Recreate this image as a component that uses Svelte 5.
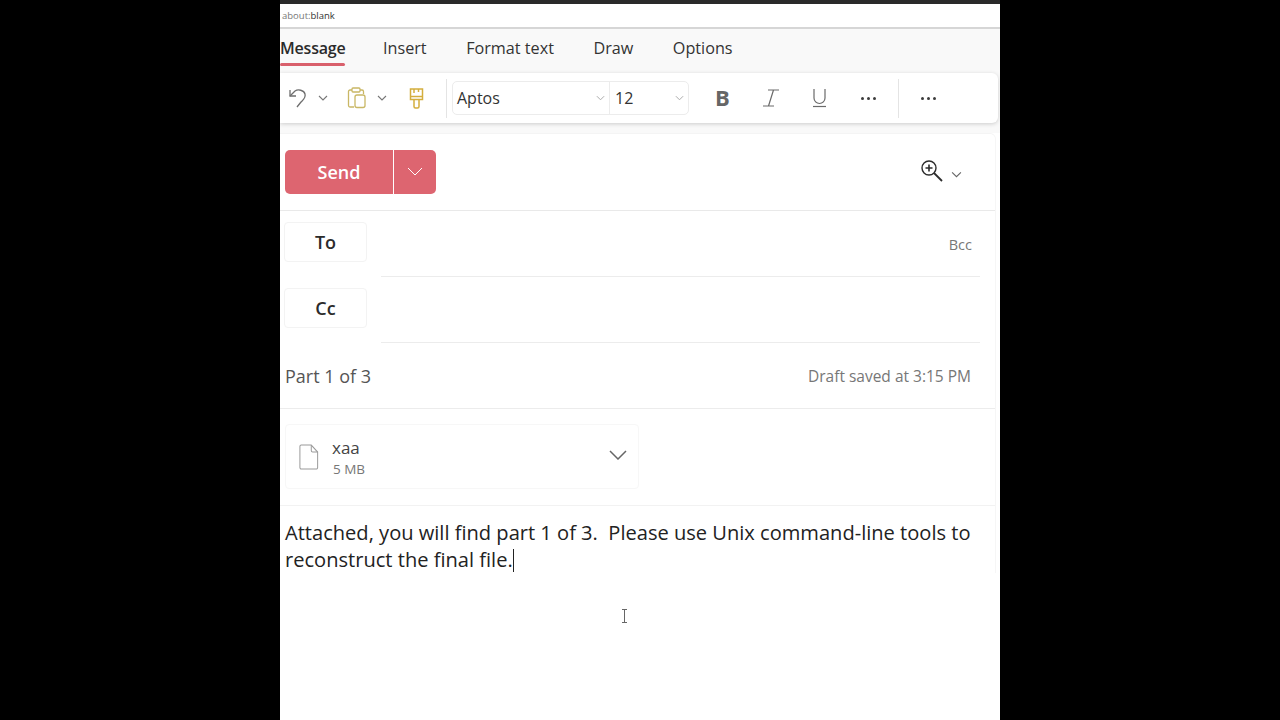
<script lang="ts">
	const tabs = ['Message', 'Insert', 'Format text', 'Draw', 'Options'];
</script>

<div class="window">
	<div class="address">
		<span class="scheme">about:</span><span class="host">blank</span>
	</div>

	<div class="ribbon">
		<nav class="tabs">
			{#each tabs as tab, i}
				<span class="tab" class:active={i === 0}>{tab}</span>
			{/each}
		</nav>

		<div class="toolbar">
			<svg class="undo" width="20" height="22" viewBox="0 0 20 22" fill="none" stroke="#6e6e6e" stroke-width="1.3">
				<path d="M2 3v6h6" />
				<path d="M2 9l5-5c3-2 9-1 10 3 1 4-2 6-4 8l-4 5" />
			</svg>
			<svg class="chev chev-undo" width="10" height="6" viewBox="0 0 10 6" fill="none" stroke="#777" stroke-width="1.1"><path d="M1 1l4 4 4-4" /></svg>
			<svg class="paste" width="20" height="22" viewBox="0 0 20 22" fill="none" stroke="#c9b765" stroke-width="1.3">
				<path d="M5 3H3a1.5 1.5 0 0 0-1.5 1.5v14A1.5 1.5 0 0 0 3 20h4" />
				<path d="M13 3h2a1.5 1.5 0 0 1 1.5 1.5V7" />
				<rect x="5" y="1" width="8" height="4" rx="1" />
				<rect x="8" y="8" width="10" height="12.5" rx="2" />
			</svg>
			<svg class="chev chev-paste" width="10" height="6" viewBox="0 0 10 6" fill="none" stroke="#777" stroke-width="1.1"><path d="M1 1l4 4 4-4" /></svg>
			<svg class="brush" width="15" height="21" viewBox="0 0 15 21" fill="none" stroke="#d4ae3e" stroke-width="1.5">
				<path d="M1.5 1h12v10.5h-12z" />
				<path d="M5 1v4M9.5 1v3" />
				<path d="M1.5 8.5h12" />
				<path d="M5 12v6.5a1.5 1.5 0 0 0 1.5 1.5h2a1.5 1.5 0 0 0 1.5-1.5V12" />
			</svg>
			<span class="divider first"></span>
			<div class="font-box">
				<div class="font-name">
					<span>Aptos</span>
					<svg width="9" height="6" viewBox="0 0 10 6" fill="none" stroke="#aaa" stroke-width="1.1"><path d="M1 1l4 4 4-4" /></svg>
				</div>
				<div class="font-size">
					<span>12</span>
					<svg width="9" height="6" viewBox="0 0 10 6" fill="none" stroke="#aaa" stroke-width="1.1"><path d="M1 1l4 4 4-4" /></svg>
				</div>
			</div>
			<span class="fmt bold">B</span>
			<svg class="italic" width="18" height="20" viewBox="0 0 18 20" fill="none" stroke="#6a6a6a" stroke-width="1.2">
				<path d="M6 2h11M1 18h11M11.5 2L6.5 18" />
			</svg>
			<svg class="underline" width="15" height="20" viewBox="0 0 15 20" fill="none" stroke="#6a6a6a" stroke-width="1.2">
				<path d="M2 1v9a5.5 5.5 0 0 0 11 0V1" />
				<path d="M1 18.5h13" />
			</svg>
			<span class="dots more-a"><i></i><i></i><i></i></span>
			<span class="divider second"></span>
			<span class="dots more-b"><i></i><i></i><i></i></span>
		</div>
	</div>

	<main class="compose">
		<div class="send-row">
			<div class="send">
				<span class="send-main">Send</span>
				<span class="send-drop">
					<svg width="16" height="9" viewBox="0 0 16 9" fill="none" stroke="#fff" stroke-width="1"><path d="M1 1l7 7 7-7" /></svg>
				</span>
			</div>
			<div class="zoom">
				<svg width="24" height="24" viewBox="0 0 24 24" fill="none" stroke="#2c2c2c" stroke-width="1.4">
					<circle cx="9" cy="9" r="7" />
					<path d="M5.5 9h7M9 5.5v7" stroke-width="1.6" />
					<path d="M14 14l8 8" stroke-width="1.8" />
				</svg>
				<svg class="zoom-chev" width="11" height="7" viewBox="0 0 10 6" fill="none" stroke="#666" stroke-width="1"><path d="M1 1l4 4 4-4" /></svg>
			</div>
		</div>

		<div class="recipient">
			<span class="pill">To</span>
			<div class="field"><span class="bcc">Bcc</span></div>
		</div>
		<div class="recipient">
			<span class="pill">Cc</span>
			<div class="field"></div>
		</div>

		<div class="subject">
			<span class="subject-text">Part 1 of 3</span>
			<span class="draft">Draft saved at 3:15 PM</span>
		</div>

		<div class="attachments">
			<div class="file">
				<svg width="20" height="26" viewBox="0 0 22 26" fill="none" stroke="#9a9a9a" stroke-width="1.1" preserveAspectRatio="none">
					<path d="M2.5 1h11l7 7v15.5a1.5 1.5 0 0 1-1.5 1.5H2.5A1.5 1.5 0 0 1 1 23.5v-21A1.5 1.5 0 0 1 2.5 1z" />
					<path d="M13.5 1v5.5A1.5 1.5 0 0 0 15 8h5.5" />
				</svg>
				<div class="file-info">
					<span class="file-name">xaa</span>
					<span class="file-size">5 MB</span>
				</div>
				<svg class="file-chev" width="18" height="10" viewBox="0 0 18 10" fill="none" stroke="#666" stroke-width="1.5"><path d="M1 1l8 8 8-8" /></svg>
			</div>
		</div>

		<div class="body-text">
			<p>Attached, you will find part 1 of 3.&nbsp; Please use Unix command-line tools to</p>
			<p>reconstruct the final file.<span class="caret"></span></p>
			<svg class="ibeam" width="7" height="14" viewBox="0 0 7 14" fill="none" stroke="#666" stroke-width="1"><path d="M1 .5h5M1 13.5h5M3.5 .5v13" /></svg>
		</div>
	</main>
</div>

<style>
	:global(body) {
		background: #000;
	}

	.window {
		width: 720px;
		height: 720px;
		margin: 0 auto;
		background: #fff;
		border-top: 4px solid #2a2a2a;
		box-sizing: border-box;
		overflow: hidden;
		font-family: 'Open Sans', 'Noto Sans', sans-serif;
		position: relative;
	}

	.address {
		height: 25px;
		box-sizing: border-box;
		padding: 4px 0 0 2px;
		font-size: 9.5px;
		line-height: 15px;
		border-bottom: 2px solid #d6d6d6;
		background: #fff;
	}

	.scheme {
		color: #777;
	}

	.host {
		color: #333;
	}

	.ribbon {
		background: #f9f9f9;
		height: 104px;
		box-sizing: border-box;
	}

	.tabs {
		display: flex;
		height: 44px;
		gap: 39.5px;
		align-items: flex-start;
		padding-top: 8px;
		box-sizing: border-box;
	}

	.tab {
		font-size: 16.2px;
		line-height: 22px;
		color: #333;
		position: relative;
	}

	.tab.active {
		font-weight: 600;
		font-size: 16px;
		letter-spacing: -0.2px;
		width: 63.5px;
		color: #2b2b2b;
	}

	.tab.active::after {
		content: '';
		position: absolute;
		left: 0;
		right: -1.5px;
		bottom: -7px;
		height: 3px;
		border-radius: 2px;
		background: #d9606c;
	}

	.toolbar {
		height: 50px;
		width: 718px;
		background: #fff;
		border-radius: 0 6px 6px 0;
		box-shadow: 0 1px 4px rgba(0, 0, 0, 0.18);
		display: flex;
		align-items: center;
		padding-left: 8px;
		box-sizing: border-box;
	}

	.undo {
		margin-left: 0;
	}

	.chev-undo {
		margin-left: 10px;
	}

	.paste {
		margin-left: 19px;
	}

	.chev-paste {
		margin-left: 10px;
	}

	.brush {
		margin-left: 22px;
	}

	.divider {
		width: 1px;
		height: 39px;
		background: #e4e4e4;
	}

	.divider.first {
		margin-left: 22px;
	}

	.divider.second {
		margin-left: 22px;
	}

	.font-box {
		display: flex;
		height: 34px;
		margin-left: 5px;
		border: 1px solid #ececec;
		border-radius: 5px;
		box-sizing: border-box;
		font-size: 16px;
		color: #333;
	}

	.font-name,
	.font-size {
		display: flex;
		align-items: center;
		justify-content: space-between;
		padding: 0 4px 0 4px;
		box-sizing: border-box;
	}

	.font-name {
		width: 157px;
		border-right: 1px solid #ececec;
	}

	.font-size {
		width: 78px;
		padding-left: 5px;
	}

	.fmt.bold {
		margin-left: 26px;
		padding-bottom: 2px;
		font-size: 22px;
		font-weight: 700;
		color: #666;
		line-height: 1;
	}

	.italic {
		margin-left: 32px;
	}

	.underline {
		margin-left: 32px;
	}

	.dots {
		display: flex;
		gap: 3px;
	}

	.dots i {
		width: 3px;
		height: 3px;
		border-radius: 50%;
		background: #3c3c3c;
	}

	.more-a {
		margin-left: 34px;
	}

	.more-b {
		margin-left: 22px;
	}

	.compose {
		width: 716px;
		background: #fff;
		border-top: 1px solid #f4f4f4;
		border-right: 1px solid #f6f6f6;
		border-radius: 0 6px 0 0;
		box-sizing: border-box;
	}

	.send-row {
		height: 77px;
		display: flex;
		justify-content: space-between;
		align-items: flex-start;
		padding: 16px 33px 0 5px;
		box-sizing: border-box;
		border-bottom: 1px solid #e9e9e9;
	}

	.send {
		display: flex;
		height: 44px;
		border-radius: 5px;
		overflow: hidden;
		color: #fff;
		background: #dd6570;
	}

	.send-main {
		width: 108px;
		font-size: 18px;
		font-weight: 600;
		line-height: 45px;
		text-align: center;
	}

	.send-drop {
		width: 43px;
		border-left: 1px solid #fff;
		display: flex;
		align-items: center;
		justify-content: center;
		padding-bottom: 1px;
		box-sizing: border-box;
	}

	.zoom {
		display: flex;
		align-items: center;
		gap: 7px;
		padding-top: 9px;
	}

	.zoom-chev {
		margin-top: 6px;
	}

	.recipient {
		display: flex;
		height: 66px;
		padding-left: 4px;
		box-sizing: border-box;
	}

	.pill {
		width: 83px;
		height: 40px;
		margin-top: 11px;
		box-sizing: border-box;
		border: 1px solid #f3f3f3;
		border-radius: 4px;
		font-size: 18px;
		font-weight: 600;
		color: #2b2b2b;
		display: flex;
		align-items: center;
		justify-content: center;
	}

	.field {
		margin-left: 14px;
		width: 599px;
		border-bottom: 1px solid #ececec;
		display: flex;
		justify-content: flex-end;
		padding: 22px 8px 0 0;
		box-sizing: border-box;
	}

	.bcc {
		font-size: 14.5px;
		line-height: 24px;
		color: #777;
		height: 24px;
	}

	.subject {
		height: 66px;
		display: flex;
		justify-content: space-between;
		align-items: center;
		padding: 0 24px 0 5px;
		box-sizing: border-box;
		border-bottom: 1px solid #ececec;
	}

	.subject-text {
		font-size: 18px;
		color: #555;
	}

	.draft {
		font-size: 15.5px;
		color: #777;
	}

	.attachments {
		height: 97px;
		padding: 15px 0 0 5px;
		box-sizing: border-box;
		border-bottom: 1px solid #f2f2f2;
	}

	.file {
		width: 354px;
		height: 65px;
		box-sizing: border-box;
		border: 1px solid #f7f7f7;
		border-radius: 4px;
		display: flex;
		align-items: center;
		padding: 0 11px 0 13px;
	}

	.file-info {
		display: flex;
		flex-direction: column;
		margin-left: 13px;
		padding-top: 3px;
	}

	.file-name {
		font-size: 17px;
		line-height: 21px;
		color: #444;
	}

	.file-size {
		font-size: 13.5px;
		line-height: 21px;
		margin: 1px 0 0 1px;
		color: #777;
	}

	.file-chev {
		margin-left: auto;
		margin-bottom: 3px;
	}

	.body-text {
		padding: 13px 0 0 5px;
		position: relative;
		font-size: 20.08px;
		line-height: 27px;
		color: #222;
	}

	.body-text p {
		margin: 0;
		white-space: nowrap;
	}

	.caret {
		display: inline-block;
		width: 1px;
		height: 23px;
		background: #222;
		vertical-align: -5px;
	}

	.ibeam {
		position: absolute;
		left: 341px;
		top: 103px;
	}
</style>
